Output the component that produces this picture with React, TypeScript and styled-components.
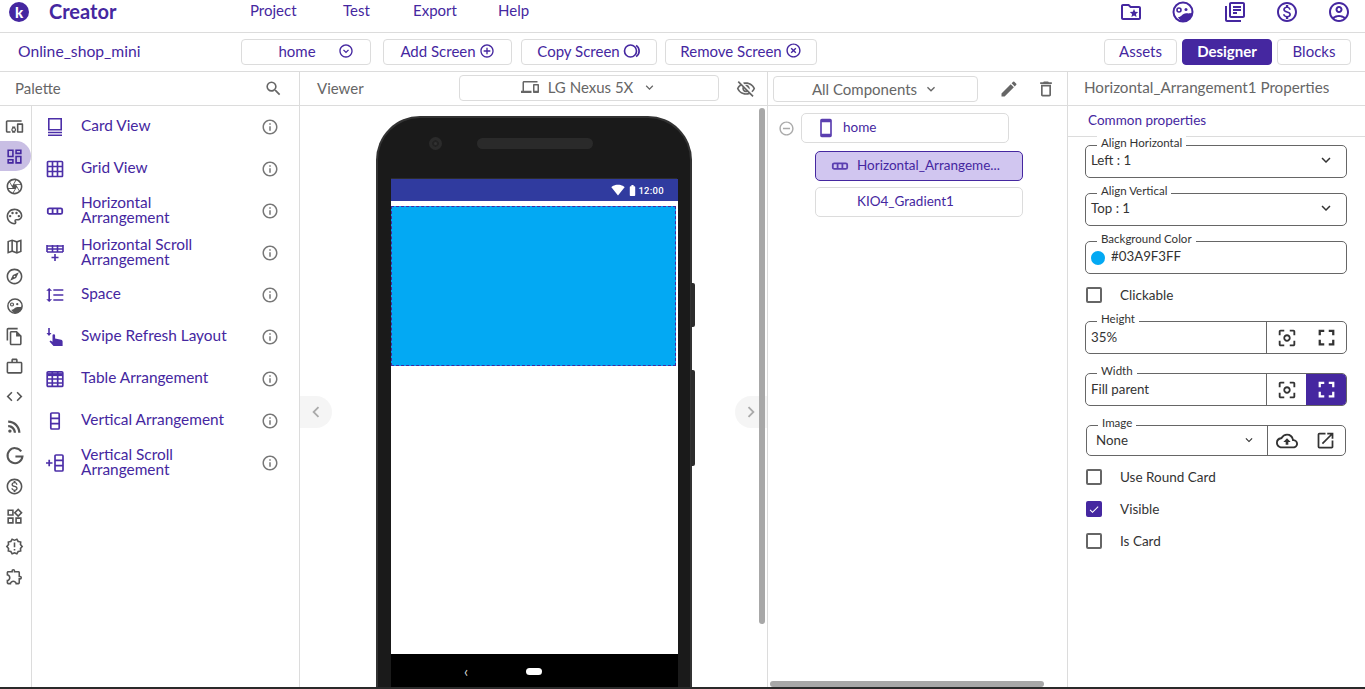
import React from 'react'
import styled, { createGlobalStyle } from 'styled-components'
import {
    MdOutlineDevicesOther, MdOutlineDashboard, MdOutlineCamera, MdOutlinePalette, MdOutlineMap, MdOutlineExplore,
    MdOutlineFileCopy, MdWorkOutline, MdCode, MdRssFeed, MdOutlineMonetizationOn, MdOutlineWidgets,
    MdOutlineNewReleases, MdOutlineExtension, MdOutlineFolderSpecial, MdOutlineLibraryBooks, MdOutlineAccountCircle,
    MdOutlineExpandCircleDown, MdOutlineAddCircleOutline, MdOutlineHighlightOff, MdSearch, MdInfoOutline, MdGridOn,
    MdFormatLineSpacing, MdOutlinePhonelink, MdExpandMore, MdOutlineVisibilityOff, MdEdit, MdOutlineDelete,
    MdOutlineRemoveCircleOutline, MdOutlineSmartphone, MdOutlineCenterFocusWeak, MdFullscreen, MdOutlineCloudUpload,
    MdOutlineOpenInNew, MdCheck, MdChevronLeft, MdChevronRight, MdSignalWifi4Bar, MdBatteryStd,
} from 'react-icons/md'

const purple = '#4527a0'
const line = '#dcdcdc'
const font = '"Lato", "Noto Sans", sans-serif'

const Global = createGlobalStyle`
    html, body { margin: 0; padding: 0; background: #fff; }
    * { box-sizing: border-box; }
    body { font-family: ${font}; overflow: hidden; }
`

// ---- icons that the packages do not have
const Face = ({ size = 24 }: { size?: number }) => (
    <svg width={size} height={size} viewBox="0 0 24 24" fill="none" stroke="currentColor" strokeWidth="2">
        <circle cx="12" cy="12" r="9.5" />
        <circle cx="8" cy="10" r="2" strokeWidth="1.6" />
        <circle cx="15" cy="9.500" r="1.500" fill="currentColor" stroke="none" />
        <path d="M7 17c3 .5 4-3 7-3.500s4 .5 7.500-1c-.5 4.500-3.500 8.500-8 9-2.500.3-5-1.500-6.500-4.500z" fill="currentColor" stroke="none" />
    </svg>
)
const GoogleG = () => (
    <svg width="20" height="20" viewBox="0 0 24 24" fill="none" stroke="currentColor" strokeWidth="2.4">
        <path d="M19.500 6.500A9 9 0 1 0 21 12.500H12.500" />
    </svg>
)
const CardIcon = () => (
    <svg width="20" height="20" viewBox="0 0 20 20" fill="none" stroke="currentColor" strokeWidth="1.6">
        <path d="M3.800 1.800h12.400v11H3.800zM3 15.500h14M3 18.300h14" />
    </svg>
)
const HorizontalIcon = ({ width = 20 }: { width?: number }) => (
    <svg width={width} height={width} viewBox="0 0 20 20" fill="none" stroke="currentColor" strokeWidth="1.8">
        <rect x="2.800" y="7.300" width="14.400" height="5.600" rx="1.500" />
        <path d="M7.600 7.300v5.600M12.400 7.300v5.600" />
    </svg>
)
const HorizontalScrollIcon = () => (
    <svg width="20" height="20" viewBox="0 0 20 20" fill="none" stroke="currentColor" strokeWidth="1.6">
        <path d="M2 2v7M2 6h16M2 3h16M7.500 2v7M12.500 2v7M18 2v7M2 9h16M10 11v7M6.500 14.500h7" />
    </svg>
)
const SwipeIcon = () => (
    <svg width="20" height="20" viewBox="0 0 20 20" fill="currentColor">
        <path d="M3.200 1h1.600v5H6.500L4 9 1.500 6h1.700z" />
        <path d="M7.500 8.500a1.300 1.300 0 0 1 2.600 0v3l6 1.200c1 .2 1.500 1 1.500 2V19H8.500L4.500 14.500l1-1 2 1.200z" />
    </svg>
)
const TableIcon = () => (
    <svg width="20" height="20" viewBox="0 0 20 20" fill="none" stroke="currentColor" strokeWidth="1.700">
        <rect x="2.200" y="2.800" width="15.600" height="14.600" rx="1" />
        <path d="M2 5.600h16" strokeWidth="3" />
        <path d="M2 10h16M2 14h16M7.300 3v14M12.700 3v14" />
    </svg>
)
const VerticalIcon = () => (
    <svg width="20" height="20" viewBox="0 0 20 20" fill="none" stroke="currentColor" strokeWidth="1.700">
        <rect x="5.800" y="2" width="8.400" height="16" rx="1" />
        <path d="M5.800 7.300h8.400M5.800 12.700h8.400" />
    </svg>
)
const VerticalScrollIcon = () => (
    <svg width="20" height="20" viewBox="0 0 20 20" fill="none" stroke="currentColor" strokeWidth="1.700">
        <rect x="10" y="2" width="8" height="16" rx="1" />
        <path d="M10 7.300h8M10 12.700h8M1 10h6.500M4.200 6.700v6.500" />
    </svg>
)
const CopyCircles = () => (
    <svg width="18" height="18" viewBox="0 0 24 24" fill="none" stroke="currentColor" strokeWidth="2.200">
        <circle cx="10" cy="12" r="8" />
        <path d="M17.500 4.500a9 9 0 0 1 0 15" />
    </svg>
)

const Page = styled.div`
    width: 1365px;
    height: 689px;
    display: flex;
    flex-direction: column;
    overflow: hidden;
    border-bottom: 2px solid #2a2a2a;
    color: ${purple};
`

// ---- first row
const TopBar = styled.header`
    height: 33px;
    flex: none;
    display: flex;
    align-items: flex-start;
    border-bottom: 1px solid ${line};
`
const Logo = styled.div`
    width: 20px;
    height: 20px;
    margin: 2px 0 0 9px;
    border-radius: 50%;
    background: ${purple};
    color: #fff;
    display: flex;
    align-items: center;
    justify-content: center;
    font-weight: 900;
    font-size: 15px;
    line-height: 1;
`
const Brand = styled.div`
    width: 221px;
    padding-left: 20px;
    font-size: 20px;
    font-weight: 700;
    line-height: 23px;
`
const Menu = styled.nav`
    display: flex;
`
const MenuItem = styled.div<{ $w: number }>`
    width: ${p => p.$w}px;
    font-size: 15px;
    line-height: 20px;
`
const TopIcons = styled.div`
    margin-left: auto;
    display: flex;
    gap: 28px;
    padding: 0 14px 0 0;
    & > * { display: block; }
`

// ---- second row
const ScreenBar = styled.div`
    height: 39px;
    flex: none;
    display: flex;
    align-items: center;
    border-bottom: 1px solid ${line};
    padding-bottom: 1px;
`
const ProjectName = styled.div`
    width: 241px;
    padding: 0 0 2px 18px;
    font-size: 15.700px;
`
const BarButton = styled.div<{ $w: number; $ml?: number; $active?: boolean; $gap?: number; $pl?: number }>`
    width: ${p => p.$w}px;
    height: 26px;
    margin-left: ${p => p.$ml ?? 0}px;
    padding: 0 0 2px ${p => p.$pl ?? 0}px;
    display: flex;
    align-items: center;
    justify-content: center;
    gap: ${p => p.$gap ?? 3}px;
    font-size: 15px;
    border: 1px solid ${p => (p.$active ? purple : line)};
    border-radius: 4px;
    background: ${p => (p.$active ? purple : '#fff')};
    color: ${p => (p.$active ? '#fff' : purple)};
    font-weight: ${p => (p.$active ? 700 : 400)};
`
const RightButtons = styled.div`
    margin-left: auto;
    padding-right: 14px;
    display: flex;
    gap: 5px;
`

// ---- panels
const Panels = styled.main`
    flex: 1;
    min-height: 0;
    display: grid;
    grid-template-columns: 300px 468px 300px 297px;
`
const Panel = styled.section<{ $last?: boolean }>`
    display: flex;
    flex-direction: column;
    min-width: 0;
    min-height: 0;
    position: relative;
    overflow: hidden;
    border-right: ${p => (p.$last ? 'none' : `1px solid ${line}`)};
`
const PanelHead = styled.div`
    height: 34px;
    flex: none;
    display: flex;
    align-items: center;
    border-bottom: 1px solid ${line};
    color: #666;
    font-size: 15px;
`
const HeadTitle = styled.div<{ $pl: number; $w?: number; $pb?: number; $size?: number }>`
    padding: 0 0 ${p => p.$pb ?? 2}px ${p => p.$pl}px;
    width: ${p => (p.$w ? `${p.$w}px` : 'auto')};
    font-size: ${p => p.$size ?? 15}px;
`
const HeadIcon = styled.div<{ $ml: number }>`
    margin-left: ${p => p.$ml}px;
    display: flex;
    color: #666;
`
const Select = styled.div<{ $w: number; $ml: number; $mt?: number; $gap?: number; $pb?: number }>`
    width: ${p => p.$w}px;
    height: 26px;
    margin: ${p => p.$mt ?? 0}px 0 0 ${p => p.$ml}px;
    padding-bottom: ${p => p.$pb ?? 0}px;
    border: 1px solid ${line};
    border-radius: 4px;
    display: flex;
    align-items: center;
    justify-content: center;
    gap: ${p => p.$gap ?? 6}px;
    color: #666;
    font-size: 15px;
`

// ---- palette
const PaletteBody = styled.div`
    flex: 1;
    display: flex;
    min-height: 0;
`
const Rail = styled.div`
    width: 32px;
    flex: none;
    border-right: 1px solid ${line};
    display: flex;
    flex-direction: column;
    padding-top: 5px;
`
const RailItem = styled.div<{ $active?: boolean }>`
    height: 30px;
    display: flex;
    align-items: center;
    justify-content: center;
    color: ${p => (p.$active ? purple : '#555')};
    background: ${p => (p.$active ? '#c9bfe4' : 'transparent')};
    border-radius: 0 15px 15px 0;
    padding-right: 2px;
`
const Items = styled.div`
    flex: 1;
    display: flex;
    flex-direction: column;
`
const Item = styled.div`
    height: 42px;
    display: grid;
    grid-template-columns: 36px 1fr 20px;
    align-items: center;
    padding: 0 18px 0 13px;
`
const ItemIcon = styled.div`
    display: flex;
    color: #4c2fa8;
`
const ItemLabel = styled.div<{ $single: boolean }>`
    font-size: 15.400px;
    line-height: 15px;
    margin-top: ${p => (p.$single ? -4 : -2)}px;
    color: #4527a0;
`
const InfoIcon = styled(MdInfoOutline)`
    color: #777;
    display: block;
`

// ---- viewer
const ViewerBody = styled.div`
    flex: 1;
    min-height: 0;
    padding: 10px 0 0 76px;
`
const Phone = styled.div`
    width: 316px;
    height: 640px;
    position: relative;
    background: #1a1a1a;
    border: 2px solid #333;
    border-bottom: none;
    border-radius: 44px 44px 0 0;
    padding: 0 13px;
`
const Sensors = styled.div`
    height: 61px;
    display: flex;
    align-items: flex-start;
    gap: 35px;
    padding: 18px 0 0 38px;
    border-bottom: 1px solid #2c2c2c;
`
const Camera = styled.div`
    width: 13px;
    height: 13px;
    margin-top: 1px;
    border-radius: 50%;
    background: #333;
    border: 3px solid #2b2b2b;
    box-shadow: inset 0 0 0 2px #222;
`
const Speaker = styled.div`
    width: 116px;
    height: 11px;
    margin-top: 2px;
    border-radius: 6px;
    background: #2a2a2a;
`
const SideButton = styled.div<{ $top: number; $h: number }>`
    position: absolute;
    right: -5px;
    top: ${p => p.$top}px;
    width: 4px;
    height: ${p => p.$h}px;
    background: #2c2c2c;
    border-radius: 0 2px 2px 0;
`
const Screen = styled.div`
    width: 287px;
    height: 475px;
    background: #fff;
`
const StatusBar = styled.div`
    height: 22px;
    background: #303b9f;
    display: flex;
    align-items: center;
    justify-content: flex-end;
    padding-right: 14px;
    gap: 1px;
    color: #fff;
    font-family: Roboto, sans-serif;
    font-size: 9.500px;
    font-weight: 500;
`
const Time = styled.span`
    margin-left: -2px;
    letter-spacing: 0.3px;
`
const Arrangement = styled.div`
    width: 285px;
    height: 160px;
    margin-top: 5px;
    background: #03a9f3;
    border: 1px dashed ${purple};
`
const NavBar = styled.div`
    width: 287px;
    height: 60px;
    background: #000;
    display: flex;
    padding: 14px 0 0 73px;
    gap: 55px;
    color: #ddd;
`
const BackMark = styled.div`
    width: 7px;
    font-size: 15px;
    line-height: 7px;
    height: 7px;
`
const HomePill = styled.div`
    width: 16px;
    height: 7px;
    border-radius: 4px;
    background: #fff;
`
const CarouselButton = styled.div<{ $side: 'left' | 'right' }>`
    position: absolute;
    ${p => p.$side}: 0;
    top: 324px;
    width: 32px;
    height: 32px;
    background: rgba(238, 238, 238, 0.6);
    border-radius: ${p => (p.$side === 'left' ? '0 16px 16px 0' : '16px 0 0 16px')};
    display: flex;
    align-items: center;
    justify-content: center;
    color: #aaa;
`
const VScrollBar = styled.div`
    position: absolute;
    right: 2px;
    top: 36px;
    width: 6px;
    height: 516px;
    background: #a8a8a8;
    border-radius: 3px;
`

// ---- component tree
const Tree = styled.div`
    flex: 1;
    display: flex;
    flex-direction: column;
    padding-top: 7px;
`
const TreeRow = styled.div<{ $indent: number; $mt: number }>`
    display: flex;
    align-items: center;
    margin-top: ${p => p.$mt}px;
    padding-left: ${p => p.$indent}px;
`
const Toggle = styled.div`
    width: 33px;
    padding-left: 4px;
    display: flex;
    justify-content: center;
    color: #aaa;
`
const TreeNode = styled.div<{ $selected?: boolean; $pl: number }>`
    width: 208px;
    height: 30px;
    padding: 0 0 2px ${p => p.$pl}px;
    border: 1px solid ${p => (p.$selected ? purple : line)};
    border-radius: 5px;
    background: ${p => (p.$selected ? '#d1c6f0' : '#fff')};
    display: flex;
    align-items: center;
    font-size: 13.500px;
    gap: 7px;
    white-space: nowrap;
`
const NodeIcon = styled.div`
    display: flex;
    margin-top: 2px;
    color: #5b3fb0;
`
const HScrollBar = styled.div`
    position: absolute;
    left: 2px;
    bottom: 0;
    width: 274px;
    height: 6px;
    background: #a8a8a8;
    border-radius: 3px;
`

// ---- properties
const SubHead = styled.div`
    height: 31px;
    flex: none;
    padding: 0 0 2px 20px;
    display: flex;
    align-items: center;
    font-size: 13.500px;
    border-bottom: 1px solid ${line};
`
const Props = styled.div`
    flex: 1;
    padding: 0 0 0 17px;
    color: #333;
`
const Field = styled.div<{ $mt: number; $w?: number; $h?: number; $ml?: number }>`
    position: relative;
    width: ${p => p.$w ?? 262}px;
    height: ${p => p.$h ?? 33}px;
    margin-top: ${p => p.$mt}px;
    margin-left: ${p => p.$ml ?? 0}px;
    border: 1px solid #666;
    border-radius: 5px;
    display: flex;
    align-items: center;
    font-size: 13.300px;
`
const Legend = styled.span<{ $left?: number }>`
    position: absolute;
    top: -10px;
    left: ${p => p.$left ?? 11}px;
    padding: 0 4px;
    background: #fff;
    font-size: 11.500px;
    line-height: 14px;
    color: #333;
`
const FieldValue = styled.div<{ $pl?: number; $pb?: number }>`
    flex: 1;
    min-width: 0;
    height: 100%;
    padding: 0 11px ${p => p.$pb ?? 3}px ${p => p.$pl ?? 5}px;
    display: flex;
    align-items: center;
    justify-content: space-between;
    color: #333;
`
const Swatch = styled.span`
    width: 14px;
    height: 14px;
    border-radius: 50%;
    background: #03a9f3;
    margin: 3px 6px 0 0;
    flex: none;
`
const ColorValue = styled.div`
    height: 100%;
    padding: 0 0 3px 5px;
    display: flex;
    align-items: center;
    font-size: 13.300px;
    color: #333;
`
const FieldAction = styled.div<{ $active?: boolean; $divider?: boolean; $w?: number }>`
    width: ${p => p.$w ?? 40}px;
    height: 100%;
    flex: none;
    display: flex;
    align-items: center;
    justify-content: center;
    border-left: ${p => (p.$divider ? '1px solid #666' : 'none')};
    background: ${p => (p.$active ? purple : 'transparent')};
    color: ${p => (p.$active ? '#fff' : '#333')};
    border-radius: ${p => (p.$active ? '0 4px 4px 0' : '0')};
`
const CheckRow = styled.div<{ $mt?: number }>`
    height: 32px;
    margin-top: ${p => p.$mt ?? 0}px;
    display: flex;
    align-items: center;
    gap: 18px;
    font-size: 13.500px;
    color: #333;
`
const Box = styled.div<{ $checked?: boolean }>`
    width: 16px;
    height: 16px;
    margin-left: 1px;
    border: 2px solid ${p => (p.$checked ? purple : '#666')};
    border-radius: 2px;
    background: ${p => (p.$checked ? purple : '#fff')};
    color: #fff;
    display: flex;
    align-items: center;
    justify-content: center;
`

const railIcons = [
    <MdOutlineDevicesOther size={19} />, <MdOutlineDashboard size={19} />, <MdOutlineCamera size={19} />,
    <MdOutlinePalette size={19} />, <MdOutlineMap size={19} />, <MdOutlineExplore size={19} />,
    <Face size={18} />, <MdOutlineFileCopy size={19} />, <MdWorkOutline size={19} />,
    <MdCode size={19} />, <MdRssFeed size={19} />, <GoogleG />, <MdOutlineMonetizationOn size={19} />,
    <MdOutlineWidgets size={19} />, <MdOutlineNewReleases size={19} />, <MdOutlineExtension size={19} />,
]

const paletteItems: { icon: React.ReactNode; label: React.ReactNode }[] = [
    { icon: <CardIcon />, label: 'Card View' },
    { icon: <MdGridOn size={20} />, label: 'Grid View' },
    { icon: <HorizontalIcon />, label: <>Horizontal<br />Arrangement</> },
    { icon: <HorizontalScrollIcon />, label: <>Horizontal Scroll<br />Arrangement</> },
    { icon: <MdFormatLineSpacing size={20} />, label: 'Space' },
    { icon: <SwipeIcon />, label: 'Swipe Refresh Layout' },
    { icon: <TableIcon />, label: 'Table Arrangement' },
    { icon: <VerticalIcon />, label: 'Vertical Arrangement' },
    { icon: <VerticalScrollIcon />, label: <>Vertical Scroll<br />Arrangement</> },
]

const App = () => (
    <Page>
        <Global />
        <TopBar>
            <Logo>k</Logo>
            <Brand>Creator</Brand>
            <Menu>
                <MenuItem $w={93}>Project</MenuItem>
                <MenuItem $w={70}>Test</MenuItem>
                <MenuItem $w={85}>Export</MenuItem>
                <MenuItem $w={60}>Help</MenuItem>
            </Menu>
            <TopIcons>
                <MdOutlineFolderSpecial size={24} />
                <Face size={24} />
                <MdOutlineLibraryBooks size={24} />
                <MdOutlineMonetizationOn size={24} />
                <MdOutlineAccountCircle size={24} />
            </TopIcons>
        </TopBar>

        <ScreenBar>
            <ProjectName>Online_shop_mini</ProjectName>
            <BarButton $w={130} $gap={22} $pl={20}>home <MdOutlineExpandCircleDown size={16} /></BarButton>
            <BarButton $w={129} $ml={12}>Add Screen <MdOutlineAddCircleOutline size={16} /></BarButton>
            <BarButton $w={136} $ml={9}>Copy Screen <CopyCircles /></BarButton>
            <BarButton $w={152} $ml={8}>Remove Screen <MdOutlineHighlightOff size={17} /></BarButton>
            <RightButtons>
                <BarButton $w={73}>Assets</BarButton>
                <BarButton $w={90} $active>Designer</BarButton>
                <BarButton $w={74}>Blocks</BarButton>
            </RightButtons>
        </ScreenBar>

        <Panels>
            <Panel>
                <PanelHead>
                    <HeadTitle $pl={15} $w={264}>Palette</HeadTitle>
                    <HeadIcon $ml={0}><MdSearch size={19} /></HeadIcon>
                </PanelHead>
                <PaletteBody>
                    <Rail>
                        {railIcons.map((icon, i) => (
                            <RailItem key={i} $active={i === 1}>{icon}</RailItem>
                        ))}
                    </Rail>
                    <Items>
                        {paletteItems.map((item, i) => (
                            <Item key={i}>
                                <ItemIcon>{item.icon}</ItemIcon>
                                <ItemLabel $single={typeof item.label === 'string'}>{item.label}</ItemLabel>
                                <InfoIcon size={18} />
                            </Item>
                        ))}
                    </Items>
                </PaletteBody>
            </Panel>

            <Panel>
                <PanelHead>
                    <HeadTitle $pl={17} $w={159}>Viewer</HeadTitle>
                    <Select $w={260} $ml={0} $mt={-2} $gap={9} $pb={1}>
                        <MdOutlinePhonelink size={18} /> LG Nexus 5X <MdExpandMore size={15} />
                    </Select>
                    <HeadIcon $ml={17}><MdOutlineVisibilityOff size={20} /></HeadIcon>
                </PanelHead>
                <ViewerBody>
                    <Phone>
                        <Sensors>
                            <Camera />
                            <Speaker />
                        </Sensors>
                        <Screen>
                            <StatusBar>
                                <MdSignalWifi4Bar size={14} />
                                <MdBatteryStd size={13} />
                                <Time>12:00</Time>
                            </StatusBar>
                            <Arrangement />
                        </Screen>
                        <NavBar>
                            <BackMark>‹</BackMark>
                            <HomePill />
                        </NavBar>
                        <SideButton $top={165} $h={44} />
                        <SideButton $top={252} $h={96} />
                    </Phone>
                </ViewerBody>
                <CarouselButton $side="left"><MdChevronLeft size={22} /></CarouselButton>
                <CarouselButton $side="right"><MdChevronRight size={22} /></CarouselButton>
                <VScrollBar />
            </Panel>

            <Panel>
                <PanelHead>
                    <Select $w={205} $ml={5}>
                        All Components <MdExpandMore size={16} />
                    </Select>
                    <HeadIcon $ml={21}><MdEdit size={20} /></HeadIcon>
                    <HeadIcon $ml={17}><MdOutlineDelete size={20} /></HeadIcon>
                </PanelHead>
                <Tree>
                    <TreeRow $indent={0} $mt={0}>
                        <Toggle><MdOutlineRemoveCircleOutline size={17} /></Toggle>
                        <TreeNode $pl={14}>
                            <NodeIcon><MdOutlineSmartphone size={20} /></NodeIcon>
                            home
                        </TreeNode>
                    </TreeRow>
                    <TreeRow $indent={47} $mt={8}>
                        <TreeNode $selected $pl={14}>
                            <NodeIcon><HorizontalIcon /></NodeIcon>
                            Horizontal_Arrangeme...
                        </TreeNode>
                    </TreeRow>
                    <TreeRow $indent={47} $mt={6}>
                        <TreeNode $pl={41}>KIO4_Gradient1</TreeNode>
                    </TreeRow>
                </Tree>
                <HScrollBar />
            </Panel>

            <Panel $last>
                <PanelHead><HeadTitle $pl={16} $pb={4} $size={15.200}>Horizontal_Arrangement1 Properties</HeadTitle></PanelHead>
                <SubHead>Common properties</SubHead>
                <Props>
                    <Field $mt={8}>
                        <Legend>Align Horizontal</Legend>
                        <FieldValue>Left : 1 <MdExpandMore size={18} /></FieldValue>
                    </Field>
                    <Field $mt={15}>
                        <Legend>Align Vertical</Legend>
                        <FieldValue>Top : 1 <MdExpandMore size={18} /></FieldValue>
                    </Field>
                    <Field $mt={15}>
                        <Legend>Background Color</Legend>
                        <ColorValue><Swatch />#03A9F3FF</ColorValue>
                    </Field>
                    <CheckRow $mt={5}><Box />Clickable</CheckRow>
                    <Field $mt={10}>
                        <Legend>Height</Legend>
                        <FieldValue $pb={1}>35%</FieldValue>
                        <FieldAction $divider><MdOutlineCenterFocusWeak size={22} /></FieldAction>
                        <FieldAction><MdFullscreen size={27} /></FieldAction>
                    </Field>
                    <Field $mt={19}>
                        <Legend>Width</Legend>
                        <FieldValue $pb={1}>Fill parent</FieldValue>
                        <FieldAction $divider><MdOutlineCenterFocusWeak size={22} /></FieldAction>
                        <FieldAction $active><MdFullscreen size={27} /></FieldAction>
                    </Field>
                    <Field $mt={19} $w={260} $h={31} $ml={1}>
                        <Legend>Image</Legend>
                        <FieldValue $pl={9} $pb={1}>None <MdExpandMore size={14} /></FieldValue>
                        <FieldAction $divider $w={39}><MdOutlineCloudUpload size={22} /></FieldAction>
                        <FieldAction $w={39}><MdOutlineOpenInNew size={21} /></FieldAction>
                    </Field>
                    <CheckRow $mt={5}><Box />Use Round Card</CheckRow>
                    <CheckRow><Box $checked><MdCheck size={13} /></Box>Visible</CheckRow>
                    <CheckRow><Box />Is Card</CheckRow>
                </Props>
            </Panel>
        </Panels>
    </Page>
)

export default App
